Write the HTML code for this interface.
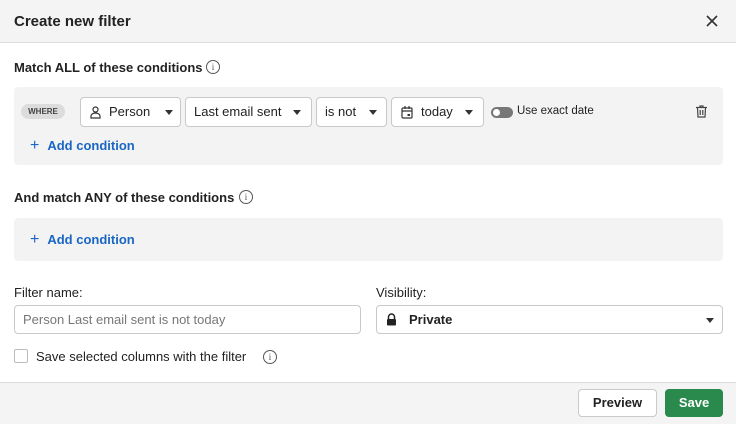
<!DOCTYPE html>
<html><head><style>
*{box-sizing:border-box;margin:0;padding:0}
body{width:736px;height:424px;background:#fff;font-family:"Liberation Sans",Arial,sans-serif;color:#222;position:relative;overflow:hidden;font-size:13px}
.a{position:absolute}
.hdr{left:0;top:0;width:736px;height:43px;background:#f4f4f4;border-bottom:1px solid #dcdcdc}
.b{font-weight:bold}
.box{background:#f3f3f3;border-radius:4px}
.sel{position:absolute;top:97px;height:30px;background:#fff;border:1px solid #c9c9c9;border-radius:4px;font-size:13px;line-height:28px;padding-left:8px}
.car{position:absolute;width:0;height:0;border-left:4px solid transparent;border-right:4px solid transparent;border-top:5px solid #333;top:12px}
.add{color:#1a66c4;font-weight:bold;font-size:13px}
.info{position:absolute;width:14px;height:14px;border:1px solid #555;border-radius:50%;font-size:9px;line-height:12px;text-align:center;font-weight:normal;color:#555;font-family:"Liberation Serif",serif}
</style></head><body>
<div class="a hdr"></div>
<div class="a b" style="left:14px;top:13px;font-size:15px">Create new filter</div>
<svg class="a" style="left:706px;top:15px" width="12" height="12"><path d="M1 1L11 11M11 1L1 11" stroke="#333" stroke-width="1.6"/></svg>

<div class="a b" style="left:14px;top:60px">Match ALL of these conditions</div>
<span class="info" style="left:206px;top:60px">i</span>
<div class="a box" style="left:14px;top:87px;width:709px;height:78px"></div>
<div class="a b" style="left:21px;top:104px;width:44px;height:15px;background:#dcdcdc;border-radius:8px;font-size:8px;line-height:15px;text-align:center;color:#444">WHERE</div>
<div class="sel" style="left:80px;width:101px"><svg style="position:absolute;left:9px;top:8px" width="11" height="13"><circle cx="5.5" cy="3.5" r="2.5" fill="none" stroke="#333" stroke-width="1.2"/><path d="M1 12V10a4.5 3 0 0 1 9 0V12Z" fill="none" stroke="#333" stroke-width="1.2"/></svg><span style="margin-left:20px">Person</span><div class="car" style="left:84px"></div></div>
<div class="sel" style="left:185px;width:127px">Last email sent<div class="car" style="left:107px"></div></div>
<div class="sel" style="left:316px;width:71px">is not<div class="car" style="left:52px"></div></div>
<div class="sel" style="left:391px;width:93px"><svg style="position:absolute;left:9px;top:8px" width="12" height="13"><rect x="1" y="2" width="10" height="10" rx="1" fill="none" stroke="#333" stroke-width="1.2"/><path d="M1 5H11M4 0V3M8 0V3" stroke="#333" stroke-width="1.2"/><rect x="6.5" y="8" width="2.5" height="2" fill="#333"/></svg><span style="margin-left:21px">today</span><div class="car" style="left:73px"></div></div>
<div class="a" style="left:491px;top:107px;width:22px;height:11px;border-radius:6px;background:#777"><div style="position:absolute;left:2px;top:2px;width:7px;height:7px;border-radius:50%;background:#fff"></div></div>
<div class="a" style="left:517px;top:105px;font-size:11.5px">Use exact date</div>
<svg class="a" style="left:696px;top:105px" width="11" height="13"><path d="M0 2.5H11M4 2.5V1H7V2.5M1.5 2.5L2 12H9L9.5 2.5M4.2 5V10M6.8 5V10" fill="none" stroke="#444" stroke-width="1.2"/></svg>
<div class="a add" style="left:30px;top:137px"><span style="font-weight:normal;font-size:16px;margin-right:8px">+</span>Add condition</div>

<div class="a b" style="left:14px;top:190px">And match ANY of these conditions</div>
<span class="info" style="left:239px;top:190px">i</span>
<div class="a box" style="left:14px;top:218px;width:709px;height:43px"></div>
<div class="a add" style="left:30px;top:231px"><span style="font-weight:normal;font-size:16px;margin-right:8px">+</span>Add condition</div>

<div class="a" style="left:14px;top:285px">Filter name:</div>
<div class="a" style="left:14px;top:305px;width:347px;height:29px;border:1px solid #c9c9c9;border-radius:4px;color:#777;padding-left:8px;line-height:27px">Person Last email sent is not today</div>
<div class="a" style="left:376px;top:285px">Visibility:</div>
<div class="a" style="left:376px;top:305px;width:347px;height:29px;border:1px solid #c9c9c9;border-radius:4px;line-height:27px">
<svg style="position:absolute;left:9px;top:7px" width="11" height="13"><path d="M2.5 6V4a3 3 0 0 1 6 0V6" fill="none" stroke="#222" stroke-width="1.5"/><rect x="1" y="6" width="9" height="6.5" rx="1" fill="#222"/></svg>
<span class="b" style="margin-left:32px">Private</span><div class="car" style="left:329px"></div></div>

<div class="a" style="left:14px;top:349px;width:14px;height:14px;border:1px solid #bbb;border-radius:2px;background:#fff"></div>
<div class="a" style="left:36px;top:349px">Save selected columns with the filter</div>
<span class="info" style="left:263px;top:350px">i</span>

<div class="a" style="left:0;top:382px;width:736px;height:42px;background:#f4f4f4;border-top:1px solid #dcdcdc"></div>
<div class="a b" style="left:578px;top:389px;width:79px;height:28px;border:1px solid #c9c9c9;border-radius:4px;background:#fff;text-align:center;line-height:26px">Preview</div>
<div class="a b" style="left:665px;top:389px;width:58px;height:28px;border-radius:4px;background:#2a8a4e;color:#fff;text-align:center;line-height:28px">Save</div>
</body></html>
